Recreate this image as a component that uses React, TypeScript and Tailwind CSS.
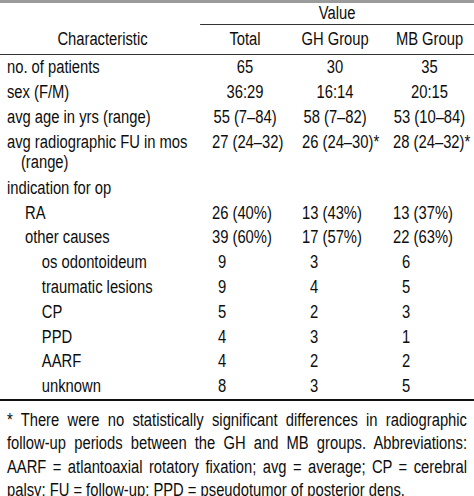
type Row = {
  label: string;
  label2?: string;
  indent: 0 | 1 | 2;
  vals?: [string, string, string];
  align?: "center" | "left" | "digit";
};

const rows: Row[] = [
  { label: "no. of patients", indent: 0, vals: ["65", "30", "35"], align: "center" },
  { label: "sex (F/M)", indent: 0, vals: ["36:29", "16:14", "20:15"], align: "center" },
  { label: "avg age in yrs (range)", indent: 0, vals: ["55 (7–84)", "58 (7–82)", "53 (10–84)"], align: "center" },
  {
    label: "avg radiographic FU in mos",
    label2: "(range)",
    indent: 0,
    vals: ["27 (24–32)", "26 (24–30)*", "28 (24–32)*"],
    align: "left",
  },
  { label: "indication for op", indent: 0 },
  { label: "RA", indent: 1, vals: ["26 (40%)", "13 (43%)", "13 (37%)"], align: "left" },
  { label: "other causes", indent: 1, vals: ["39 (60%)", "17 (57%)", "22 (63%)"], align: "left" },
  { label: "os odontoideum", indent: 2, vals: ["9", "3", "6"], align: "digit" },
  { label: "traumatic lesions", indent: 2, vals: ["9", "4", "5"], align: "digit" },
  { label: "CP", indent: 2, vals: ["5", "2", "3"], align: "digit" },
  { label: "PPD", indent: 2, vals: ["4", "3", "1"], align: "digit" },
  { label: "AARF", indent: 2, vals: ["4", "2", "2"], align: "digit" },
  { label: "unknown", indent: 2, vals: ["8", "3", "5"], align: "digit" },
];

// everything below is laid out 1/0.82 wider and squeezed back with scale-x,
// since no narrow Arial face is installed
const indentCls = ["pl-[8.5px]", "pl-[30.5px]", "pl-[51px]"];
const leftPad = ["pl-[8.5px]", "pl-[20.7px]", "pl-[9.8px]"];
const digitPad = ["pl-[15.9px]", "pl-[30.5px]", "pl-[20.7px]"];

const cols = "grid grid-cols-[250px_97.6px_122px_1fr]";

const cellCls = (align: Row["align"], i: number) => {
  if (align === "center") return "text-center";
  if (align === "digit") return digitPad[i];
  return leftPad[i] + " whitespace-nowrap";
};

const App = () => {
  return (
    <div className="w-[474px] h-[496px] overflow-hidden bg-white text-[#0d0d0d] text-[18px] font-['Liberation_Sans',Arial,sans-serif]">
      <div className="w-[578px] origin-left scale-x-[0.82]">
        <div className="h-[3px] bg-[#9b9b9b]" />

        {/* header */}
        <div className="grid grid-cols-[244px_1fr]">
          <div />
          <div className="h-[22px] leading-[20px] text-center border-b border-[#333]">Value</div>
        </div>
        <div className={cols + " h-[30px] items-center border-b border-[#333]"}>
          <div className="text-center">Characteristic</div>
          <div className="text-center">Total</div>
          <div className="text-center">GH Group</div>
          <div className="text-center">MB Group</div>
        </div>

        {/* body */}
        <div>
          {rows.map((r) => (
            <div
              key={r.label}
              className={
                cols + " leading-[20px] " + (r.label2 ? "pt-[3px] pb-[3px]" : "h-[24.8px] items-center")
              }
            >
              <div className={indentCls[r.indent] + " whitespace-nowrap"}>
                {r.label}
                {r.label2 && <div className="pl-[17px]">{r.label2}</div>}
              </div>
              {r.vals ? (
                r.vals.map((v, i) => (
                  <div key={i} className={cellCls(r.align, i)}>
                    {v}
                  </div>
                ))
              ) : (
                <div className="col-span-3" />
              )}
            </div>
          ))}
        </div>
        <div className="h-[2.5px] bg-[#111]" />

        {/* footnote */}
        <p className="mt-[8px] px-[8.5px] leading-[23.3px] text-justify">
          * There were no statistically significant differences in radiographic follow-up periods between the GH and
          MB groups. Abbreviations: AARF = atlantoaxial rotatory fixation; avg = average; CP = cerebral palsy; FU =
          follow-up; PPD = pseudotumor of posterior dens.
        </p>
      </div>
    </div>
  );
};

export default App;
